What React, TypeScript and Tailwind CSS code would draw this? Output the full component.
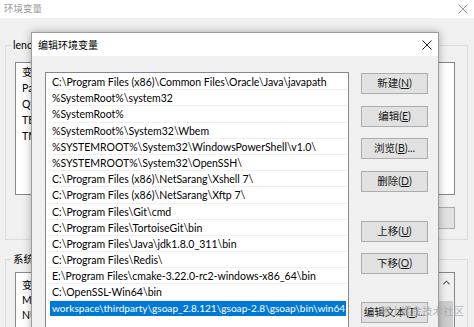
import React from "react";

const paths = [
  "C:\\Program Files (x86)\\Common Files\\Oracle\\Java\\javapath",
  "%SystemRoot%\\system32",
  "%SystemRoot%",
  "%SystemRoot%\\System32\\Wbem",
  "%SYSTEMROOT%\\System32\\WindowsPowerShell\\v1.0\\",
  "%SYSTEMROOT%\\System32\\OpenSSH\\",
  "C:\\Program Files (x86)\\NetSarang\\Xshell 7\\",
  "C:\\Program Files (x86)\\NetSarang\\Xftp 7\\",
  "C:\\Program Files\\Git\\cmd",
  "C:\\Program Files\\TortoiseGit\\bin",
  "C:\\Program Files\\Java\\jdk1.8.0_311\\bin",
  "C:\\Program Files\\Redis\\",
  "E:\\Program Files\\cmake-3.22.0-rc2-windows-x86_64\\bin",
  "C:\\OpenSSL-Win64\\bin",
];

const selected = "workspace\\thirdparty\\gsoap_2.8.121\\gsoap-2.8\\gsoap\\bin\\win64";

const userVars = ["变量", "Path", "Qt5_DIR", "TEMP", "TMP"];
const sysVars = ["变量", "MAVEN_HOME", "NUMBER_OF_PROCESSORS"];

const CloseIcon = ({ className }: { className?: string }) => (
  <svg viewBox="0 0 10 10" className={className} fill="none" stroke="currentColor" strokeWidth="1">
    <path d="M0.5 0.5 L9.5 9.5 M9.5 0.5 L0.5 9.5" />
  </svg>
);

const Button = ({ label, hot, tail, className }: { label: string; hot: string; tail?: string; className?: string }) => (
  <div
    className={`h-[21px] w-full flex items-center justify-center whitespace-nowrap bg-[#e1e1e1] border border-[#adadad] text-[10.5px] text-[#1a1a1a] ${className ?? ""}`}
  >
    {label}(<span className="underline">{hot}</span>){tail}
  </div>
);

const App = () => {
  return (
    <div className="relative w-[474px] h-[327px] overflow-hidden bg-[#f0f0f0] [font-family:Lato,'Noto_Sans_CJK_SC',sans-serif] text-[10.5px] text-black">
      {/* background window: 环境变量 */}
      <div className="h-[18px] bg-white flex items-center justify-between pl-[4px] pr-[6px]">
        <span className="text-[9.5px] text-[#9a9a9a] leading-none">环境变量</span>
        <CloseIcon className="w-[10px] h-[10px] text-[#9a9a9a]" />
      </div>

      <div className="relative mt-[27px] ml-[5px] mr-[6px] border border-[#dcdcdc] pt-[16px] pl-[9px] pr-[12px] pb-[10px]">
        <span className="absolute -top-[8px] left-[6px] bg-[#f0f0f0] px-[1px] leading-[14px]">lenovo 的用户变量(U)</span>
        <div className="h-[133px] bg-white border border-[#828790] pt-[1px]">
          {userVars.map((v, i) => (
            <div key={i} className="h-[16px] pl-[6px] leading-[16px] whitespace-nowrap">
              {v}
            </div>
          ))}
        </div>
        <div className="flex justify-end mt-[12px]">
          <div className="h-[22px] w-[67px] bg-[#e1e1e1] border border-[#adadad]" />
        </div>
      </div>

      <div className="relative mt-[19px] ml-[5px] mr-[6px] border border-[#dcdcdc] pt-[12px] pl-[9px] pr-[12px] h-[80px]">
        <span className="absolute -top-[8px] left-[6px] bg-[#f0f0f0] px-[1px] leading-[14px]">系统变量(S)</span>
        <div className="relative h-[80px] bg-white border border-[#828790] pt-[5px]">
          {sysVars.map((v, i) => (
            <div key={i} className="h-[15px] pl-[6px] leading-[15px] whitespace-nowrap">
              {v}
            </div>
          ))}
          <div className="absolute right-0 top-0 bottom-0 w-[16px] bg-[#f0f0f0] flex flex-col items-center">
            <svg viewBox="0 0 8 5" className="w-[7px] h-[5px] mt-[7px] text-[#606060]" fill="none" stroke="currentColor" strokeWidth="1.3">
              <path d="M0.5 4.5 L4 1 L7.5 4.5" />
            </svg>
            <div className="mt-[16px] w-[14px] h-[40px] bg-[#cdcdcd]" />
          </div>
        </div>
      </div>

      {/* foreground dialog: 编辑环境变量 */}
      <div className="absolute left-[31px] top-[32px] w-[408px] h-[310px] bg-[#f0f0f0] border border-[#9c9c9c] shadow-[0_0_8px_rgba(0,0,0,0.3)]">
        <div className="h-[23px] bg-white flex items-center justify-between pl-[6px] pr-[6px]">
          <span className="text-[10px] leading-none">编辑环境变量</span>
          <CloseIcon className="w-[10px] h-[10px] text-[#222]" />
        </div>

        <div className="flex pt-[16px] pl-[13px] gap-[12px]">
          <div className="w-[304px] h-[280px] bg-white border border-[#828790] pt-[1px] px-[1px]">
            {paths.map((p, i) => (
              <div key={i} className="h-[16.2px] pl-[5px] leading-[16px] whitespace-nowrap overflow-hidden border-b border-[#f0f0f0]">
                {p}
              </div>
            ))}
            <div className="h-[16.2px] pl-[3px] pr-[1px] flex items-center">
              <span className="w-full h-[15px] leading-[15px] pl-[2px] bg-[#0078d7] text-white text-[10.1px] whitespace-nowrap overflow-hidden">
                {selected}
              </span>
            </div>
          </div>

          <div className="w-[67px] flex flex-col pt-[1px]">
            <Button label="新建" hot="N" />
            <Button label="编辑" hot="E" className="mt-[12px]" />
            <Button label="浏览" hot="B" tail="..." className="mt-[11px]" />
            <Button label="删除" hot="D" className="mt-[12px]" />
            <Button label="上移" hot="U" className="mt-[29px]" />
            <Button label="下移" hot="O" className="mt-[11px]" />
            <Button label="编辑文本" hot="T" tail="..." className="mt-[28px]" />
          </div>
        </div>
      </div>

      <span className="absolute right-[10px] bottom-[7px] text-[10.5px] text-[#a8a8a8] opacity-80 whitespace-nowrap">
        稀土掘金技术社区
      </span>
    </div>
  );
};

export default App;
